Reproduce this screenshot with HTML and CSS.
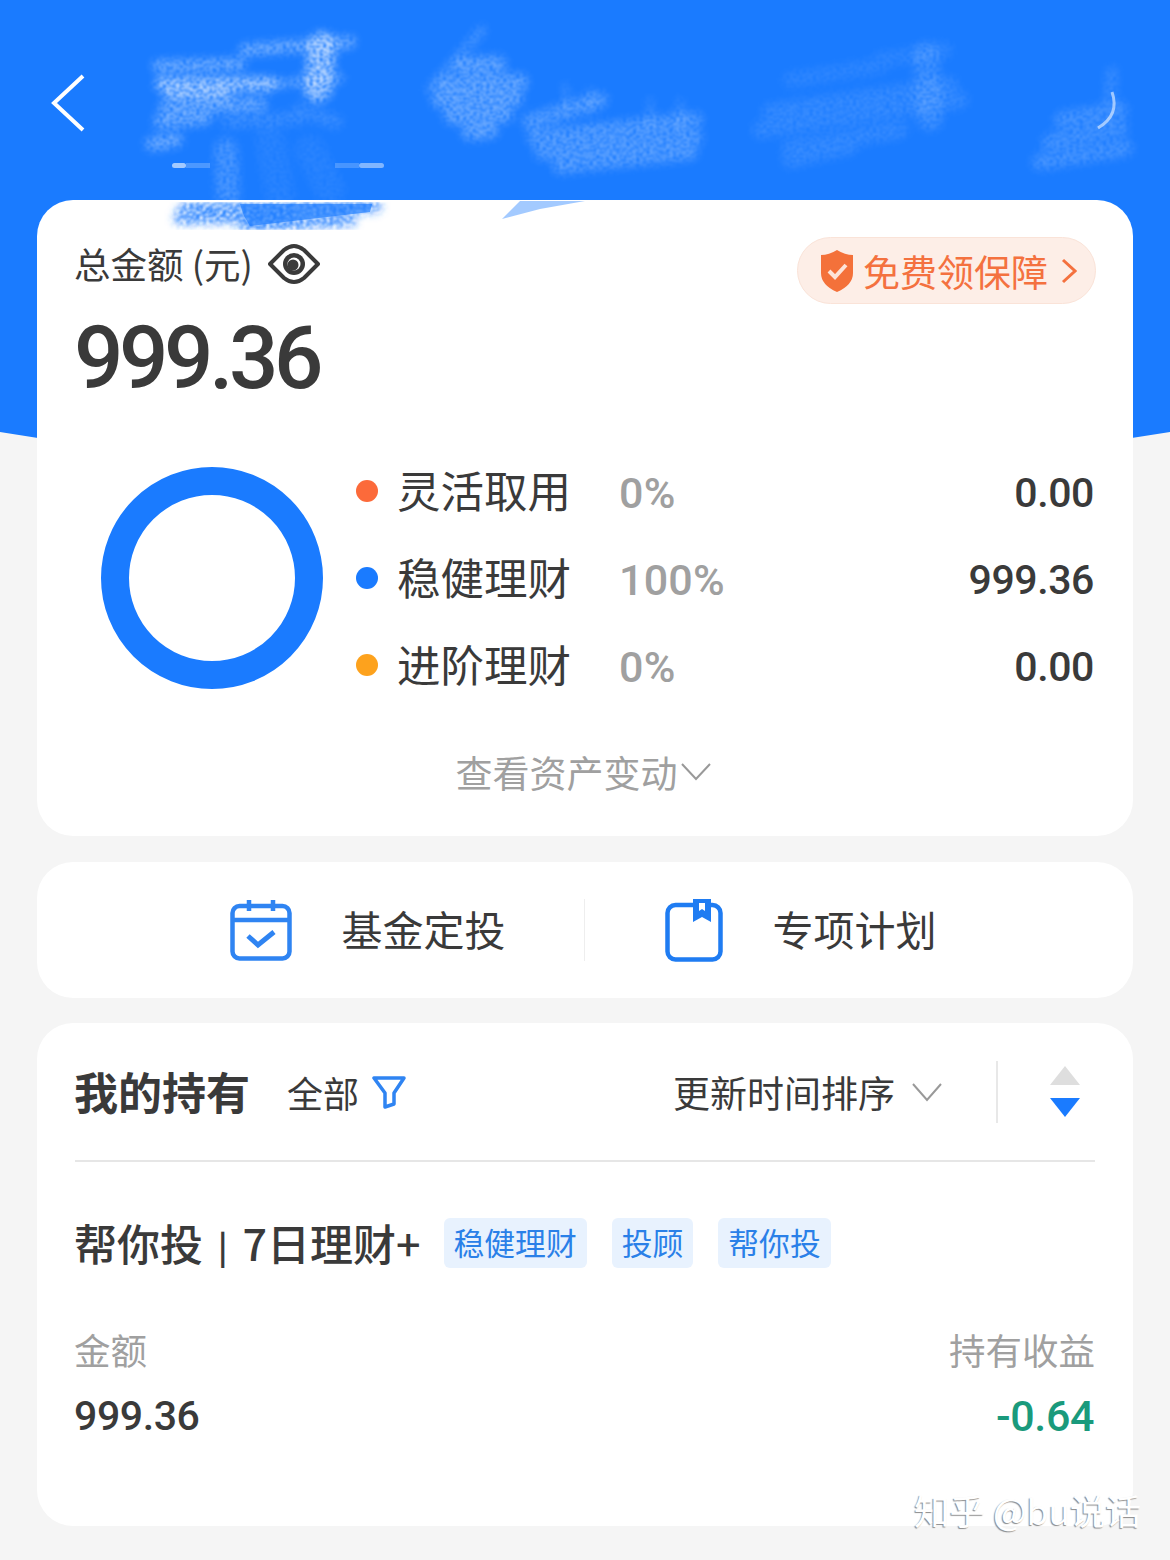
FILE: index.html
```html
<!DOCTYPE html>
<html lang="zh-CN">

<head>
  <meta charset="UTF-8">
  <title>我的持有</title>
  <link rel="stylesheet" href="styles.css">
</head>

<body>
  <div class="header-bg"></div>

  <div class="page">
    <!-- Top bar -->
    <div class="topbar">
      <svg class="back" width="36" height="60" viewBox="0 0 36 60">
        <path d="M32 3 L3 30 L32 57" fill="none" stroke="#fff" stroke-width="4" />
      </svg>
    </div>

    <!-- Summary card -->
    <div class="card summary">
      <div class="summary-top">
        <div>
          <div class="total-label">
            <span>总金额 (元)</span>
            <svg width="52" height="42" viewBox="0 0 52 42">
              <path d="M2 21 L16 7 Q26 -1 36 7 L50 21 L36 35 Q26 43 16 35 Z" fill="none" stroke="#3a3a3a" stroke-width="4" stroke-linejoin="round" />
              <circle cx="26" cy="21" r="11" fill="#3a3a3a" />
              <circle cx="26" cy="21" r="6.5" fill="#fff" />
              <circle cx="25" cy="22" r="5.5" fill="#3a3a3a" />
            </svg>
          </div>
          <div class="total-value">999.36</div>
        </div>
        <div class="badge">
          <svg width="34" height="44" viewBox="0 0 34 44">
            <path d="M17 1 Q25 6 33 6 L33 24 Q33 36 17 43 Q1 36 1 24 L1 6 Q9 6 17 1 Z" fill="#f4713a" />
            <path d="M9 22 L15 28 L26 16" fill="none" stroke="#fde4d8" stroke-width="4" />
          </svg>
          <span>免费领保障</span>
          <svg width="16" height="26" viewBox="0 0 16 26">
            <path d="M2 2 L14 13 L2 24" fill="none" stroke="#f4713f" stroke-width="3" />
          </svg>
        </div>
      </div>

      <div class="alloc">
        <div class="donut"></div>
        <div class="alloc-list">
          <div class="alloc-row">
            <i class="dot dot-red"></i>
            <span class="alloc-name">灵活取用</span>
            <span class="alloc-pct">0%</span>
            <span class="alloc-val">0.00</span>
          </div>
          <div class="alloc-row">
            <i class="dot dot-blue"></i>
            <span class="alloc-name">稳健理财</span>
            <span class="alloc-pct">100%</span>
            <span class="alloc-val">999.36</span>
          </div>
          <div class="alloc-row">
            <i class="dot dot-orange"></i>
            <span class="alloc-name">进阶理财</span>
            <span class="alloc-pct">0%</span>
            <span class="alloc-val">0.00</span>
          </div>
        </div>
      </div>

      <div class="changes">
        <span>查看资产变动</span>
        <svg width="32" height="20" viewBox="0 0 32 20">
          <path d="M2 2 L16 17 L30 2" fill="none" stroke="#999" stroke-width="2" />
        </svg>
      </div>
    </div>

    <!-- Shortcuts -->
    <div class="card shortcuts">
      <div class="shortcut shortcut-left">
        <svg width="62" height="62" viewBox="0 0 62 62">
          <rect x="2.5" y="7" width="57" height="52.5" rx="7" fill="none" stroke="#2f84f2" stroke-width="4.5" />
          <path d="M2 21 H60 M19 1 V12 M43 1 V12" fill="none" stroke="#2f84f2" stroke-width="4.5" />
          <path d="M18 37 L28 46 L44 33" fill="none" stroke="#2f84f2" stroke-width="5" />
        </svg>
        <span>基金定投</span>
      </div>
      <div class="shortcut shortcut-right">
        <svg width="58" height="64" viewBox="0 0 58 64">
          <rect x="2.5" y="7" width="53" height="54.5" rx="8" fill="none" stroke="#1f7cf2" stroke-width="4.5" />
          <path d="M28 1 H46 V24 L37 19 L28 24 Z" fill="#1f7cf2" />
          <path d="M34 5 H40 V13 L37 11 L34 13 Z" fill="#fff" />
        </svg>
        <span>专项计划</span>
      </div>
    </div>

    <!-- Holdings -->
    <div class="card holdings">
      <div class="hold-head">
        <span class="hold-title">我的持有</span>
        <span class="hold-all">全部</span>
        <svg class="funnel" width="34" height="34" viewBox="0 0 34 34">
          <path d="M2 3 H32 L22 18 V29 L13 32 V18 Z" fill="none" stroke="#2f84f2" stroke-width="3.5" stroke-linejoin="round" />
        </svg>
        <span class="hold-sort">更新时间排序</span>
        <svg class="sort-chev" width="32" height="20" viewBox="0 0 32 20">
          <path d="M2 2 L16 18 L30 2" fill="none" stroke="#999" stroke-width="2" />
        </svg>
        <div class="sort-arrows">
          <i class="arrow-up"></i>
          <i class="arrow-down"></i>
        </div>
      </div>

      <div class="product">
        <span class="product-name">帮你投<i class="sep">|</i>7日理财+</span>
        <span class="tag">稳健理财</span>
        <span class="tag">投顾</span>
        <span class="tag">帮你投</span>
      </div>

      <div class="figures">
        <div>
          <div class="fig-label">金额</div>
          <div class="fig-value">999.36</div>
        </div>
        <div class="fig-right">
          <div class="fig-label">持有收益</div>
          <div class="fig-value green">-0.64</div>
        </div>
      </div>
    </div>
  </div>

  <!-- Scribbled-out account name -->
  <svg class="scribble" width="1170" height="240" viewBox="0 0 1170 240">
    <defs>
      <filter id="grain" x="-10%" y="-20%" width="120%" height="140%">
        <feGaussianBlur in="SourceGraphic" stdDeviation="4.5" result="soft" />
        <feTurbulence type="fractalNoise" baseFrequency="0.3 0.5" numOctaves="2" seed="7" result="n" />
        <feColorMatrix in="n" type="matrix" values="0 0 0 0 0  0 0 0 0 0  0 0 0 0 0  0 0 0 3.5 -1.1" result="m" />
        <feComposite in="soft" in2="m" operator="in" />
        <feGaussianBlur stdDeviation="0.8" />
      </filter>
    </defs>
    <g filter="url(#grain)" fill="none" stroke="#fff" stroke-linecap="round">
      <!-- first block -->
      <path d="M158 66 L240 64 M245 50 L350 42" stroke-width="12" opacity=".45" />
      <path d="M162 84 L270 84 M170 92 L225 92" stroke-width="14" opacity=".7" />
      <path d="M270 82 L272 84 L340 78" stroke-width="8" opacity=".4" />
      <path d="M322 46 L318 88" stroke-width="28" opacity=".7" />
      <path d="M165 108 L260 104 M160 122 L205 118 M152 144 L176 140" stroke-width="14" opacity=".42" />
      <path d="M228 122 L300 118 M300 110 L336 122" stroke-width="14" opacity=".16" />
      <path d="M226 150 L228 195" stroke-width="24" opacity=".24" />
      <path d="M270 140 L280 195 M310 150 L330 190" stroke-width="30" opacity=".08" />
      <!-- second block -->
      <path d="M482 30 L430 90" stroke-width="10" opacity=".22" />
      <path d="M462 66 L498 64 M445 85 L520 82 M440 100 L515 98 M452 116 L505 114 M470 132 L490 130" stroke-width="17" opacity=".38" />
      <path d="M530 122 L600 100 M535 138 L695 120 M542 152 L695 138 M560 166 L690 152" stroke-width="16" opacity=".3" />
      <path d="M565 85 L568 112 M590 90 L590 112 M650 100 L650 130 M680 100 L680 130" stroke-width="4" opacity=".3" />
      <!-- third block -->
      <path d="M770 112 L950 85 M760 130 L960 100 M790 148 L900 130 M790 160 L850 146" stroke-width="17" opacity=".14" />
      <path d="M790 80 L880 66 M880 60 L945 50" stroke-width="16" opacity=".1" />
      <path d="M926 55 L930 118" stroke-width="26" opacity=".18" />
      <!-- last block -->
      <path d="M1062 120 L1120 110 M1050 142 L1120 128 M1040 162 L1125 148" stroke-width="17" opacity=".22" />
      <path d="M1112 72 L1110 100" stroke-width="12" opacity=".16" />
    </g>
    <g fill="#fff">
      <rect x="172" y="163" width="14" height="5" rx="2.5" opacity=".6" />
      <rect x="186" y="163" width="24" height="5" opacity=".22" />
      <rect x="335" y="163" width="24" height="5" opacity=".2" />
      <rect x="359" y="163" width="25" height="5" rx="2.5" opacity=".45" />
    </g>
    <path d="M1112 92 Q1120 115 1098 128" fill="none" stroke="#fff" stroke-width="3" opacity=".55" />
    <g filter="url(#grain)" fill="none" stroke="#1a7bff" stroke-linecap="round">
      <path d="M185 208 L375 206 M180 218 L290 216 M245 226 L350 220" stroke-width="13" />
    </g>
    <path d="M240 204 H372 L370 212 L250 226 L244 216 Z" fill="#1a7bff" opacity=".65" />
    <path d="M502 219 L520 201 L585 201 L540 209 Z" fill="#1a7bff" opacity=".4" />
  </svg>

  <div class="watermark">知乎 @bu说话</div>
</body>

</html>
```

FILE: styles.css
```css
body {
  margin: 0;
  width: 1170px;
  height: 1560px;
  overflow: hidden;
  position: relative;
  background-color: #f5f5f5;
  font-family: "Noto Sans CJK SC", "Noto Sans", sans-serif;
  color: #3a3a3a;
}

svg {
  display: block;
  flex: none;
}

.header-bg {
  position: absolute;
  left: 0;
  top: 0;
  width: 1170px;
  height: 480px;
  background-color: #1a7bff;
  clip-path: path("M0 0H1170V432Q585 530 0 432Z");
}

.page {
  position: relative;
  padding: 0 37px;
}

.topbar {
  height: 200px;
  display: flex;
  align-items: center;
}

.back {
  margin: 6px 0 0 14px;
}

.scribble {
  position: absolute;
  left: 0;
  top: 0;
}

.card {
  background-color: #fff;
  border-radius: 36px;
  box-sizing: border-box;
}

/* summary card */
.summary {
  height: 636px;
  padding: 37px 37px 0 37px;
}

.summary-top {
  display: flex;
  justify-content: space-between;
  align-items: flex-start;
}

.total-label {
  display: flex;
  align-items: center;
  gap: 15px;
  height: 54px;
  font-size: 36.5px;
  line-height: 54px;
}

.total-value {
  margin-top: 17px;
  height: 100px;
  font-family: Roboto, sans-serif;
  font-weight: 500;
  font-size: 87px;
  line-height: 100px;
  letter-spacing: -4.4px;
}

.badge {
  display: flex;
  align-items: center;
  box-sizing: border-box;
  height: 67px;
  width: 299px;
  padding-left: 22px;
  border: 1px solid #fae3d8;
  border-radius: 34px;
  background-color: #fdeee7;
  color: #f4713f;
  font-size: 37px;
}

.badge span {
  margin: 0 13px 0 9px;
}

.alloc {
  display: flex;
  align-items: center;
  margin-top: 39px;
}

.donut {
  flex: none;
  width: 166px;
  height: 166px;
  margin-left: 27px;
  border: 28px solid #1a7bff;
  border-radius: 50%;
}

.alloc-list {
  flex: 1;
  margin-left: 33px;
}

.alloc-row {
  display: flex;
  align-items: center;
  height: 87px;
}

.dot {
  flex: none;
  width: 22px;
  height: 22px;
  border-radius: 50%;
}

.dot-red { background-color: #fc6a3a; }
.dot-blue { background-color: #1a7bff; }
.dot-orange { background-color: #fda21d; }

.alloc-name {
  width: 222px;
  margin-left: 19px;
  padding-bottom: 2px;
  font-size: 43.5px;
}

.alloc-pct {
  padding-top: 4px;
  font-family: Roboto, sans-serif;
  font-weight: 500;
  font-size: 43px;
  letter-spacing: 0.2px;
  color: #a0a0a0;
}

.alloc-val {
  margin: 0 2px 0 auto;
  padding-top: 4px;
  font-family: Roboto, sans-serif;
  font-weight: 500;
  font-size: 41px;
  letter-spacing: -0.4px;
}

.changes {
  display: flex;
  justify-content: center;
  align-items: center;
  gap: 2px;
  margin-top: 36px;
  height: 56px;
  padding-right: 3px;
  font-size: 37px;
  color: #a0a0a0;
}

/* shortcuts */
.shortcuts {
  display: flex;
  height: 136px;
  margin-top: 26px;
}

.shortcut {
  flex: 1;
  display: flex;
  align-items: center;
  font-size: 41px;
}

.shortcut span {
  padding-bottom: 4px;
}

.shortcut-left {
  justify-content: flex-end;
  gap: 50px;
  padding-right: 79px;
  position: relative;
}

.shortcut-left::after {
  content: "";
  position: absolute;
  right: 0;
  top: 37px;
  height: 62px;
  border-right: 1px solid #eeeeee;
}

.shortcut-right {
  gap: 50px;
  padding-left: 80px;
}

/* holdings */
.holdings {
  height: 503px;
  margin-top: 25px;
  padding: 0 38px;
}

.hold-head {
  display: flex;
  align-items: center;
  height: 137px;
  border-bottom: 2px solid #e6e6e6;
}

.hold-title {
  margin-left: -1px;
  padding-bottom: 2px;
  font-size: 44px;
  font-weight: 700;
}

.hold-all {
  margin-left: 37px;
  font-size: 36px;
}

.funnel {
  margin-left: 13px;
}

.hold-sort {
  margin-left: auto;
  font-size: 37px;
}

.sort-chev {
  margin-left: 16px;
}

.sort-arrows {
  display: flex;
  flex-direction: column;
  align-items: center;
  gap: 13px;
  margin-left: 53px;
  padding: 0 15px 0 52px;
  height: 62px;
  justify-content: center;
  border-left: 2px solid #e8e8e8;
}

.arrow-up,
.arrow-down {
  width: 0;
  height: 0;
  border-left: 15px solid transparent;
  border-right: 15px solid transparent;
}

.arrow-up {
  border-bottom: 19px solid #dedede;
}

.arrow-down {
  border-top: 19px solid #1a7bff;
}

.product {
  display: flex;
  align-items: center;
  height: 50px;
  margin-top: 56px;
}

.product-name {
  margin: 0 23px 0 -1px;
  padding-bottom: 2px;
  font-size: 43px;
  font-weight: 500;
}

.sep {
  margin: 0 15px;
  font-style: normal;
  font-size: 32px;
  font-weight: 700;
  vertical-align: 2px;
}

.tag {
  height: 50px;
  margin-right: 25px;
  padding: 0 10px;
  border-radius: 6px;
  background-color: #e8f2fe;
  color: #2a80e8;
  font-size: 30.8px;
  line-height: 48px;
}

.figures {
  display: flex;
  justify-content: space-between;
  margin-top: 55px;
}

.fig-right {
  text-align: right;
}

.fig-label {
  margin-left: -1px;
  height: 54px;
  font-size: 36.5px;
  line-height: 54px;
  color: #a0a0a0;
}

.fig-value {
  height: 70px;
  margin: 4px 0 0 -1px;
  font-family: Roboto, sans-serif;
  font-weight: 500;
  font-size: 41px;
  line-height: 70px;
  letter-spacing: -0.4px;
}

.green {
  margin-right: 1px;
  font-size: 43px;
  color: #1a9a7c;
}

.watermark {
  position: absolute;
  left: 914px;
  top: 1486px;
  font-size: 35.5px;
  line-height: 48px;
  color: #fff;
  text-shadow: -1px 1px 1px #8a8a8a;
  white-space: nowrap;
}
```
